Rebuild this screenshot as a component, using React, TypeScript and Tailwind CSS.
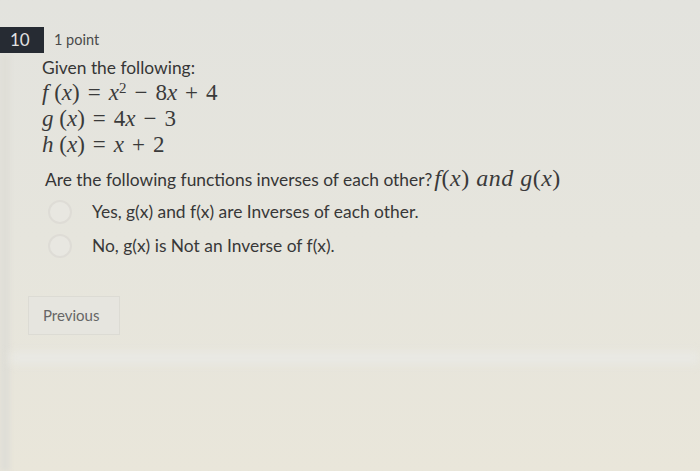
import React from "react";

const sans = { fontFamily: "Lato, 'Open Sans', sans-serif" };
const serif = { fontFamily: "'Liberation Serif', 'DejaVu Serif', serif" };

function V({ children }: { children: React.ReactNode }) {
  return <span className="italic">{children}</span>;
}

function Op({ children }: { children: React.ReactNode }) {
  return <span className="mx-[8px]">{children}</span>;
}

function MathLine({ children }: { children: React.ReactNode }) {
  return (
    <div className="h-[26px] leading-[26px] text-[23px] text-[#3a3a3a]" style={serif}>
      {children}
    </div>
  );
}

function Option({ label }: { label: string }) {
  return (
    <div className="flex h-[34px] items-center gap-[20px]">
      <span className="h-[24px] w-[24px] rounded-full border-2 border-[#dedcd6] bg-[#e8e7e1]" />
      <span className="text-[17.4px] text-[#383838]" style={sans}>
        {label}
      </span>
    </div>
  );
}

export default function App() {
  return (
    <div className="relative h-[471px] w-[700px] overflow-hidden bg-linear-to-b from-[#e3e3de] via-[#e6e5dd] to-[#e9e6da]">
      {/* faint darker strip at left edge */}
      <div className="absolute left-0 top-[55px] h-[416px] w-[10px] bg-[#dfded7] blur-[2px]" />
      {/* lighter band under the button area */}
      <div className="absolute left-[10px] top-[352px] h-[12px] w-[690px] bg-[#e9e9e4] blur-[4px]" />

      <div className="relative pt-[27px]">
        {/* Header */}
        <div className="flex items-center">
          <div
            className="flex h-[26px] w-[44px] items-center pl-[10px] text-[17px] text-[#e2e2e2] bg-[#262b33]"
            style={sans}
          >
            10
          </div>
          <span className="ml-[10px] text-[14.5px] text-[#4a4a4a]" style={sans}>
            1 point
          </span>
        </div>

        {/* Question */}
        <div className="pl-[42px]">
          <div className="mt-[4px] h-[22px] leading-[22px] text-[17.4px] text-[#363636]" style={sans}>
            Given the following:
          </div>
          <div className="mt-[1px]">
            <MathLine>
              <V>f</V>&nbsp;(<V>x</V>)<Op>=</Op>
              <V>x</V>
              <sup className="text-[15px]">2</sup>
              <Op>−</Op>8<V>x</V>
              <Op>+</Op>4
            </MathLine>
            <MathLine>
              <V>g</V>&nbsp;(<V>x</V>)<Op>=</Op>4<V>x</V>
              <Op>−</Op>3
            </MathLine>
            <MathLine>
              <V>h</V>&nbsp;(<V>x</V>)<Op>=</Op>
              <V>x</V>
              <Op>+</Op>2
            </MathLine>
          </div>
          <div className="mt-[7px] h-[26px] pl-[3px] leading-[26px] text-[17.4px] text-[#363636]" style={sans}>
            Are the following functions inverses of each other?
            <span className="ml-[2px] text-[24px] tracking-[0.5px] text-[#3a3a3a]" style={serif}>
              <V>f</V>(<V>x</V>) <V>and</V> <V>g</V>(<V>x</V>)
            </span>
          </div>
          <div className="mt-[4px] pl-[6px]">
            <Option label="Yes, g(x) and f(x) are Inverses of each other." />
            <Option label="No, g(x) is Not an Inverse of f(x)." />
          </div>
        </div>

        {/* Footer */}
        <div className="mt-[33px] pl-[28px]">
          <button
            className="h-[39px] w-[92px] border border-[#dcdbd4] bg-[#e6e5df] pl-[14px] text-left text-[15px] text-[#666666]"
            style={sans}
          >
            Previous
          </button>
        </div>
      </div>
    </div>
  );
}
